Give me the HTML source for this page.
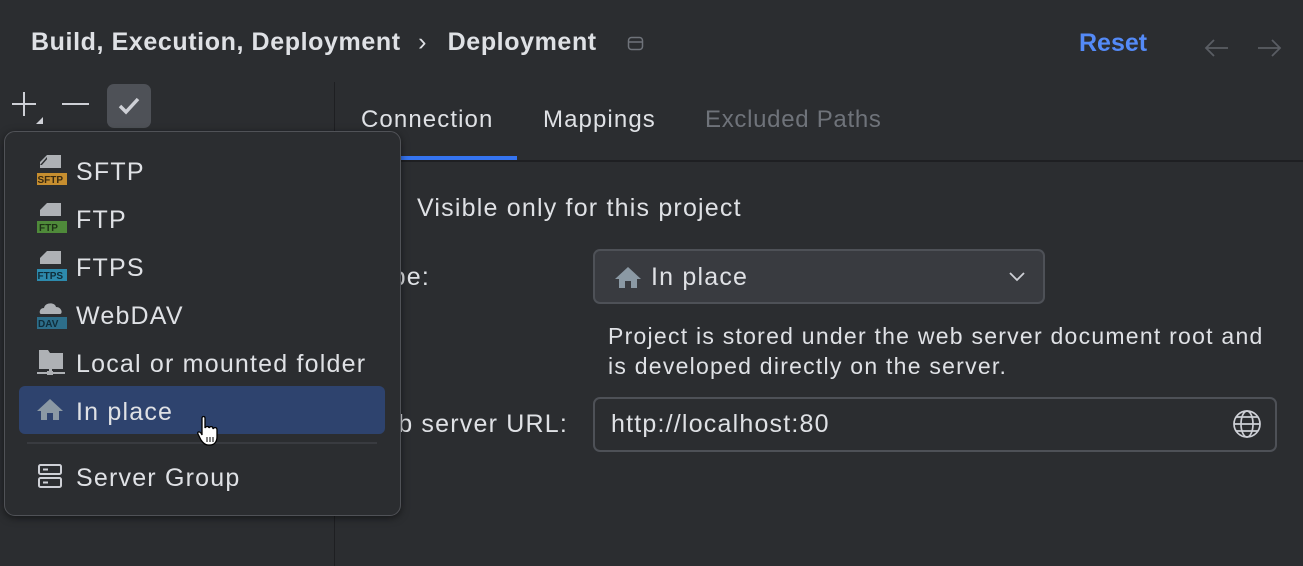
<!DOCTYPE html>
<html><head><style>
*{margin:0;padding:0;box-sizing:border-box}
body{width:1303px;height:566px;background:#2b2d30;font-family:"Liberation Sans",sans-serif;color:#dfe1e5;position:relative;overflow:hidden}
.a{position:absolute;white-space:nowrap}
.m{font-size:25px;letter-spacing:1.2px;line-height:28px}
</style></head><body>
<div class="a" style="left:31px;top:28px;font-size:25px;font-weight:bold;color:#dfe1e5;letter-spacing:0.6px">Build, Execution, Deployment <span style="font-weight:normal;margin:0 13px 0 10px">›</span> Deployment</div>
<svg class="a" style="left:627px;top:36px" width="18" height="16"><rect x="1.5" y="1.5" width="14" height="12" rx="3" fill="none" stroke="#6f737a" stroke-width="1.5"/><line x1="2" y1="6" x2="15" y2="6" stroke="#6f737a" stroke-width="1.5"/></svg>
<div class="a" style="left:1079px;top:29px;font-size:25px;font-weight:bold;color:#548af7">Reset</div>
<svg class="a" style="left:1203px;top:37px" width="80" height="22"><path d="M25 11H3M11 3L3 11L11 19" fill="none" stroke="#5a5d63" stroke-width="1.8"/><path d="M55 11H77M69 3L77 11L69 19" fill="none" stroke="#5a5d63" stroke-width="1.8"/></svg>
<div class="a" style="left:334px;top:82px;width:1px;height:484px;background:#1e1f22"></div>
<svg class="a" style="left:10px;top:90px" width="40" height="36"><path d="M14 2V26M2 14H26" stroke="#ced0d6" stroke-width="2"/><path d="M33 27L33 34L26 34Z" fill="#ced0d6"/></svg>
<div class="a" style="left:62px;top:103px;width:27px;height:2px;background:#ced0d6"></div>
<div class="a" style="left:107px;top:84px;width:44px;height:44px;background:#4e5157;border-radius:7px"></div>
<svg class="a" style="left:117px;top:94px" width="24" height="24"><path d="M3 12L9 18L21 5" fill="none" stroke="#ced0d6" stroke-width="3.5"/></svg>
<div class="a" style="left:335px;top:160px;width:968px;height:2px;background:#1e1f22"></div>
<div class="a" style="left:361px;top:106px;font-size:24px;letter-spacing:1.1px;color:#dfe1e5">Connection</div>
<div class="a" style="left:343px;top:156px;width:174px;height:4px;background:#3574f0"></div>
<div class="a" style="left:543px;top:106px;font-size:24px;letter-spacing:1.1px;color:#dfe1e5">Mappings</div>
<div class="a" style="left:705px;top:106px;font-size:24px;letter-spacing:0.7px;color:#6f737a">Excluded Paths</div>
<div class="a m" style="left:417px;top:194px">Visible only for this project</div>
<div class="a m" style="right:873px;top:263px">pe:</div>
<div class="a" style="left:593px;top:249px;width:452px;height:55px;background:#393b40;border:2px solid #4e5157;border-radius:7px"></div>
<svg class="a" style="left:614px;top:265px" width="28" height="24"><path d="M14 2L1 14H5V23H11V16H17V23H23V14H27Z" fill="#8b99a4"/></svg>
<div class="a m" style="left:651px;top:263px">In place</div>
<svg class="a" style="left:1007px;top:270px" width="20" height="14"><path d="M3 3L10 10L17 3" fill="none" stroke="#ced0d6" stroke-width="1.8"/></svg>
<div class="a" style="left:608px;top:321px;font-size:23px;letter-spacing:1.25px;line-height:30px">Project is stored under the web server document root and<br>is developed directly on the server.</div>
<div class="a m" style="right:735px;top:410px">b server URL:</div>
<div class="a" style="left:593px;top:397px;width:684px;height:55px;border:2px solid #4e5157;border-radius:7px"></div>
<div class="a m" style="left:611px;top:410px">http://localhost:80</div>
<svg class="a" style="left:1232px;top:409px" width="30" height="30"><g fill="none" stroke="#ced0d6" stroke-width="1.7"><circle cx="15" cy="15" r="13"/><ellipse cx="15" cy="15" rx="6" ry="13"/><line x1="2" y1="15" x2="28" y2="15"/><line x1="4" y1="8" x2="26" y2="8"/><line x1="4" y1="22" x2="26" y2="22"/></g></svg>
<div class="a" style="left:4px;top:131px;width:397px;height:385px;background:#2b2d30;border:1.5px solid #505257;border-radius:11px;box-shadow:0 2px 8px rgba(0,0,0,.5)"></div>
<div class="a" style="left:19px;top:386px;width:366px;height:48px;background:#2e436e;border-radius:6px"></div>
<div class="a" style="left:27px;top:442px;width:350px;height:2px;background:#393b40"></div>
<div class="a m" style="left:76px;top:158px">SFTP</div>
<div class="a m" style="left:76px;top:206px">FTP</div>
<div class="a m" style="left:76px;top:254px">FTPS</div>
<div class="a m" style="left:76px;top:302px">WebDAV</div>
<div class="a m" style="left:76px;top:350px">Local or mounted folder</div>
<div class="a m" style="left:76px;top:398px">In place</div>
<div class="a m" style="left:76px;top:464px">Server Group</div>
<svg class="a" style="left:36px;top:155px" width="32" height="340">
<g><path d="M11 0H25V13H4V7Z" fill="#aeb1b5"/><path d="M11 2V10H4Z" fill="#2b2d30"/><path d="M13 2V11H5Z" fill="#aeb1b5"/><rect x="1" y="18" width="30" height="12" fill="#c78e2f"/><text x="1.5" y="28" font-size="10" font-family="Liberation Sans" fill="#3a2a10" font-weight="bold">SFTP</text></g>
<g transform="translate(0,48)"><path d="M11 0H25V13H4V7Z" fill="#aeb1b5"/><rect x="1" y="18" width="30" height="12" fill="#4f8a3a"/><text x="3" y="28" font-size="10" font-family="Liberation Sans" fill="#1d3315" font-weight="bold">FTP</text></g>
<g transform="translate(0,96)"><path d="M11 0H25V13H4V7Z" fill="#aeb1b5"/><rect x="1" y="18" width="30" height="12" fill="#2d8aad"/><text x="1.5" y="28" font-size="10" font-family="Liberation Sans" fill="#0f2d3a" font-weight="bold">FTPS</text></g>
<g transform="translate(0,144)"><path d="M5 15C3 15 3 9 8 9C9 3 19 3 20 8C26 8 27 15 24 15Z" fill="#aeb1b5"/><rect x="1" y="18" width="30" height="12" fill="#2d6e8a"/><text x="2" y="28" font-size="10" font-family="Liberation Sans" fill="#0f2d3a" font-weight="bold">DAV</text></g>
<g transform="translate(0,192)"><path d="M3 3H12L14 6H27V22H3Z" fill="#aeb1b5"/><rect x="13" y="22" width="3" height="4" fill="#aeb1b5"/><rect x="1" y="25" width="28" height="2" fill="#aeb1b5"/><rect x="11" y="24" width="6" height="4" fill="#aeb1b5"/></g>
<g transform="translate(0,240)"><path d="M14 4L1 16H5V25H11V18H17V25H23V16H27Z" fill="#8b99a4"/></g>
<g transform="translate(0,308)" fill="none" stroke="#ced0d6" stroke-width="2"><rect x="3" y="2" width="22" height="9" rx="1.5"/><rect x="3" y="15" width="22" height="9" rx="1.5"/><line x1="7" y1="6.5" x2="12" y2="6.5"/><line x1="7" y1="19.5" x2="12" y2="19.5"/></g>
</svg>
<svg class="a" style="left:196px;top:415px" width="28" height="34"><path d="M6 3C6 1 9 1 9 3V13C10 11 13 11 13 13C14 11 17 11 17 14C18 12 21 12 21 15V22C21 27 18 30 14 30H12C9 30 7 28 5 25L2 19C1 17 3 16 5 18L6 20Z" fill="#fff" stroke="#000" stroke-width="1.3"/><path d="M11 22V27M14 22V27M17 22V27" stroke="#000" stroke-width="1"/></svg>
</body></html>
